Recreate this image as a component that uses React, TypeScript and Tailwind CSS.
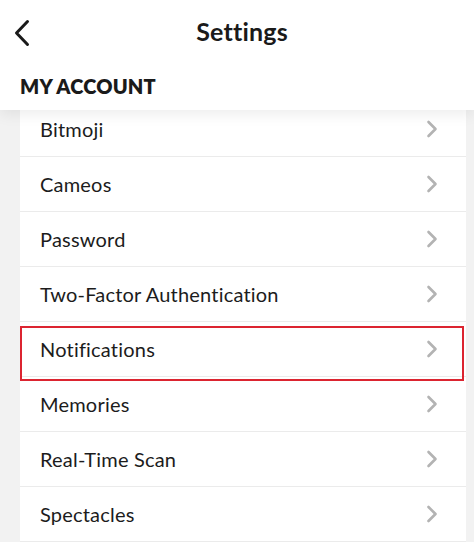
import React from "react";

const items = [
  "Bitmoji",
  "Cameos",
  "Password",
  "Two-Factor Authentication",
  "Notifications",
  "Memories",
  "Real-Time Scan",
  "Spectacles",
];

function Chevron() {
  return (
    <svg width="12" height="18" viewBox="0 0 12 18" fill="none">
      <path d="M2.5 2 L9.5 9 L2.5 16" stroke="#b3b3b3" strokeWidth="2.6" strokeLinecap="round" strokeLinejoin="round" />
    </svg>
  );
}

export default function App() {
  return (
    <div
      className="relative w-[474px] h-[542px] overflow-hidden bg-[#f2f2f2] flex flex-col"
      style={{ fontFamily: '"Lato", "Open Sans", sans-serif' }}
    >
      <div className="relative z-10 bg-white h-[110px] shrink-0 shadow-[0_4px_14px_rgba(0,0,0,0.08)] flex flex-col">
        <div className="relative h-[64px] flex items-center justify-center">
          <div className="absolute left-[13px] top-[19px]">
            <svg width="18" height="28" viewBox="0 0 18 28" fill="none">
              <path d="M14.5 2.5 L3.5 14 L14.5 25.5" stroke="#1a1a1a" strokeWidth="3" strokeLinecap="round" strokeLinejoin="round" />
            </svg>
          </div>
          <span className="text-[25px] font-bold text-[#1a1a1a] tracking-[0.2px] pl-[10px]">Settings</span>
        </div>
        <div className="pl-[20px] pt-[12px] text-[20px] font-extrabold text-[#1a1a1a] leading-none tracking-[0.2px]">
          MY ACCOUNT
        </div>
      </div>
      <div className="ml-[20px] mr-[8px] -mt-[8px] bg-white flex flex-col">
        {items.map((t) => (
          <div
            key={t}
            className="h-[55px] shrink-0 flex items-center justify-between pl-[20px] pr-[28px] border-b border-[#ebebeb]"
          >
            <span className="text-[20px] text-[#1c1c1c] tracking-[0.2px] -mt-[1px]">{t}</span>
            <Chevron />
          </div>
        ))}
      </div>
      <div className="absolute left-[20px] top-[326px] w-[444px] h-[55px] border-2 border-[#dc2430] z-20" />
    </div>
  );
}
